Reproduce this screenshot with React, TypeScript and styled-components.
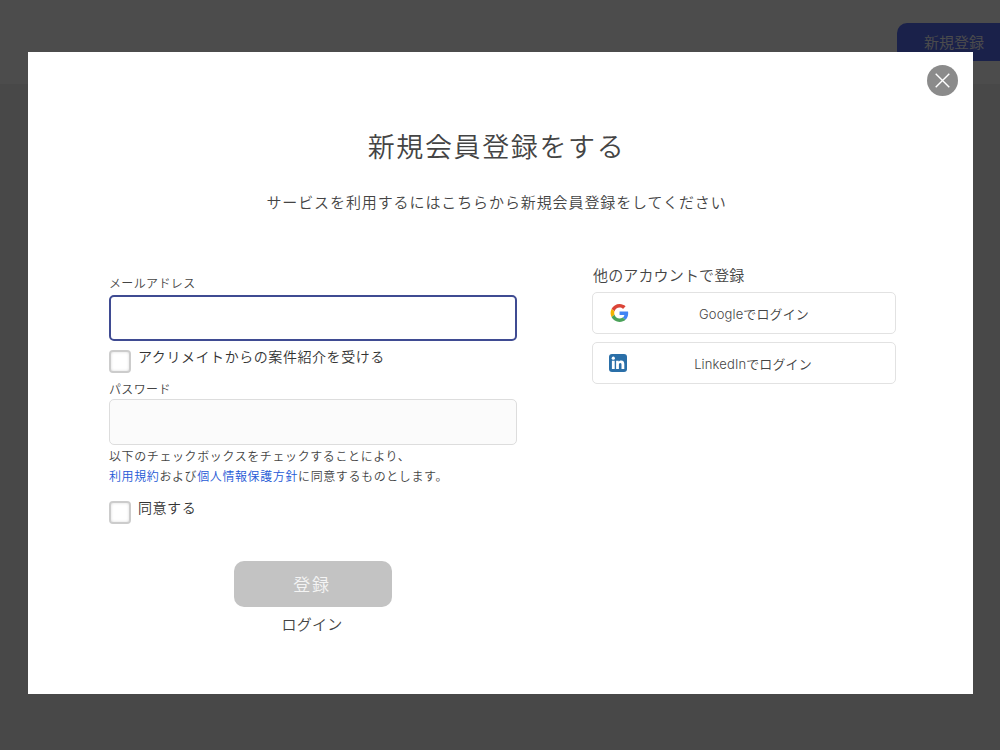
import React from "react";
import styled, { createGlobalStyle } from "styled-components";

const Global = createGlobalStyle`
  *, *::before, *::after { box-sizing: border-box; }
  html, body { margin: 0; min-height: 100%; }
  body {
    background: #f2f2f2;
    color: #444;
    font-family: "Noto Sans CJK JP", sans-serif;
    font-weight: 350;
  }
  button, input { font: inherit; }
`;

const PageHeader = styled.header`
  display: flex;
  justify-content: flex-end;
  height: 84px;
  padding-top: 23px;
  overflow: hidden;
  background: #fff;
`;

const HeaderButton = styled.button`
  width: 114px;
  height: 38px;
  margin-right: -11px;
  padding: 0 0 2px;
  border: 0;
  border-radius: 10px;
  background: #586ff8;
  color: #fff;
  font-size: 15px;
`;

const Overlay = styled.div`
  position: fixed;
  inset: 0;
  padding: 52px 27px 52px 28px;
  overflow: auto;
  background: rgba(0, 0, 0, 0.7);
`;

const Dialog = styled.section`
  position: relative;
  padding: 74px 77px 60px 81px;
  background: #fff;
`;

const CloseButton = styled.button`
  position: absolute;
  top: 13px;
  right: 15px;
  display: grid;
  place-items: center;
  width: 31px;
  height: 31px;
  padding: 0;
  border: 0;
  border-radius: 50%;
  background: #8b8b8b;
`;

const Intro = styled.div`
  padding-right: 12px;
  text-align: center;
`;

const Title = styled.h1`
  margin: 0 0 24px;
  font-size: 27px;
  font-weight: 350;
  line-height: 40px;
  letter-spacing: 0.06em;
`;

const Lead = styled.p`
  margin: 0 0 50px;
  font-size: 15px;
  line-height: 24px;
  letter-spacing: 0.06em;
`;

const Columns = styled.div`
  display: grid;
  grid-template-columns: 408fr 304fr;
  column-gap: 75px;
  align-items: start;
`;

const Form = styled.form`
  display: flex;
  flex-direction: column;
  padding-top: 9px;
`;

const FieldLabel = styled.label`
  font-size: 12px;
  line-height: 20px;
  letter-spacing: 0.03em;
  color: #444;
`;

const TextInput = styled.input<{ $active?: boolean }>`
  width: 100%;
  height: 46px;
  margin-top: ${(p) => (p.$active ? "2px" : "0")};
  padding: 0 12px;
  border: ${(p) => (p.$active ? "2px solid #3f4b92" : "1px solid #ddd")};
  border-radius: 5px;
  outline: none;
  background: ${(p) => (p.$active ? "#fff" : "#fbfbfb")};
`;

const CheckRow = styled.div<{ $top: number; $bottom: number }>`
  display: flex;
  gap: 7px;
  margin: ${(p) => p.$top}px 0 ${(p) => p.$bottom}px;
  font-size: 14px;
  line-height: 20px;
  letter-spacing: 0.04em;
  color: #333;
`;

const CheckBox = styled.input`
  appearance: none;
  width: 22px;
  height: 23px;
  margin: 4px 0 0;
  border: 2px solid #ccc;
  border-radius: 4px;
  background: #fff;
  box-shadow: inset 0 0 3px rgba(0, 0, 0, 0.15);
`;

const Terms = styled.p`
  margin: 1px 0 0;
  font-size: 12px;
  line-height: 20px;
  letter-spacing: 0.05em;
  color: #444;
`;

const TermsLink = styled.a`
  color: #2459d6;
  text-decoration: none;
`;

const SubmitButton = styled.button`
  align-self: center;
  width: 158px;
  height: 46px;
  padding: 0 2px 2px 0;
  border: 0;
  border-radius: 10px;
  background: #c3c3c3;
  color: #f4f4f4;
  font-size: 17px;
  letter-spacing: 0.1em;
`;

const LoginLink = styled.a`
  align-self: center;
  margin-top: 7px;
  padding-right: 2px;
  font-size: 15px;
  line-height: 20px;
  letter-spacing: 0.02em;
  color: #444;
  text-decoration: none;
`;

const Social = styled.div`
  display: flex;
  flex-direction: column;
  gap: 8px;
`;

const SocialHeading = styled.h2`
  margin: -1px 0 -3px;
  padding-left: 1px;
  font-size: 15px;
  font-weight: 350;
  line-height: 24px;
  letter-spacing: 0.01em;
`;

const SocialButton = styled.button`
  display: flex;
  align-items: center;
  height: 42px;
  padding: 0 16px;
  border: 1px solid #e2e2e2;
  border-radius: 5px;
  background: #fff;
  color: #444;
`;

const SocialText = styled.span`
  flex: 1;
  padding-top: 1px;
  font-family: Inter, "Noto Sans CJK JP", sans-serif;
  font-size: 13px;
  line-height: 20px;
  letter-spacing: 0.01em;
`;

const CloseIcon = () => (
  <svg width="15" height="15" viewBox="0 0 15 15" fill="none" stroke="#fff" strokeWidth="1.4" aria-hidden="true">
    <path d="M0.7 0.7 14.3 14.3M14.3 0.7 0.7 14.3" />
  </svg>
);

const GoogleIcon = () => (
  <svg width="20" height="18" viewBox="-3 0 51 48" aria-hidden="true">
    <path fill="#DB4437" d="M24 9.5c3.54 0 6.71 1.22 9.21 3.6l6.85-6.85C35.9 2.38 30.47 0 24 0 14.62 0 6.51 5.38 2.56 13.22l7.98 6.19C12.43 13.72 17.74 9.5 24 9.5z" />
    <path fill="#4285F4" d="M46.98 24.55c0-1.57-.15-3.09-.38-4.55H24v9.02h12.94c-.58 2.96-2.26 5.48-4.78 7.18l7.73 6c4.51-4.18 7.09-10.36 7.09-17.65z" />
    <path fill="#F4B400" d="M10.53 28.59A14.5 14.5 0 0 1 9.77 24c0-1.6.27-3.14.76-4.59l-7.98-6.19A23.9 23.9 0 0 0 0 24c0 3.88.92 7.54 2.56 10.78l7.97-6.19z" />
    <path fill="#4BA25A" d="M24 48c6.48 0 11.93-2.13 15.89-5.81l-7.73-6c-2.15 1.45-4.92 2.3-8.16 2.3-6.26 0-11.57-4.22-13.47-9.91l-7.98 6.19C6.51 42.62 14.62 48 24 48z" />
  </svg>
);

const LinkedInIcon = () => (
  <svg width="18" height="18" viewBox="0 0 18 18" aria-hidden="true">
    <rect width="18" height="18" rx="3" fill="#2a6fa8" />
    <circle cx="4.3" cy="4.2" r="1.6" fill="#fff" />
    <path fill="#fff" d="M2.9 6.700h2.800v8.200H2.900zM7.100 6.700h2.600v1.100c.5-.8 1.400-1.300 2.500-1.300 2.400 0 3.100 1.500 3.100 3.700v4.700h-2.800v-4.100c0-1.100-.2-1.900-1.200-1.900-1.100 0-1.400.8-1.400 1.900v4.100H7.100z" />
  </svg>
);

export default function App() {
  return (
    <>
      <Global />
      <PageHeader>
        <HeaderButton type="button">新規登録</HeaderButton>
      </PageHeader>
      <Overlay>
        <Dialog role="dialog" aria-modal="true" aria-labelledby="signup-title">
          <CloseButton type="button" aria-label="閉じる">
            <CloseIcon />
          </CloseButton>
          <Intro>
            <Title id="signup-title">新規会員登録をする</Title>
            <Lead>サービスを利用するにはこちらから新規会員登録をしてください</Lead>
          </Intro>
          <Columns>
            <Form>
              <FieldLabel htmlFor="email">メールアドレス</FieldLabel>
              <TextInput id="email" type="email" $active />
              <CheckRow $top={5} $bottom={6}>
                <CheckBox id="offers" type="checkbox" />
                <label htmlFor="offers">アクリメイトからの案件紹介を受ける</label>
              </CheckRow>
              <FieldLabel htmlFor="password">パスワード</FieldLabel>
              <TextInput id="password" type="password" />
              <Terms>
                以下のチェックボックスをチェックすることにより、
                <br />
                <TermsLink href="#terms">利用規約</TermsLink>および
                <TermsLink href="#privacy">個人情報保護方針</TermsLink>に同意するものとします。
              </Terms>
              <CheckRow $top={11} $bottom={37}>
                <CheckBox id="agree" type="checkbox" />
                <label htmlFor="agree">同意する</label>
              </CheckRow>
              <SubmitButton type="submit">登録</SubmitButton>
              <LoginLink href="#login">ログイン</LoginLink>
            </Form>
            <Social>
              <SocialHeading>他のアカウントで登録</SocialHeading>
              <SocialButton type="button">
                <GoogleIcon />
                <SocialText>Googleでログイン</SocialText>
              </SocialButton>
              <SocialButton type="button">
                <LinkedInIcon />
                <SocialText>LinkedInでログイン</SocialText>
              </SocialButton>
            </Social>
          </Columns>
        </Dialog>
      </Overlay>
    </>
  );
}
